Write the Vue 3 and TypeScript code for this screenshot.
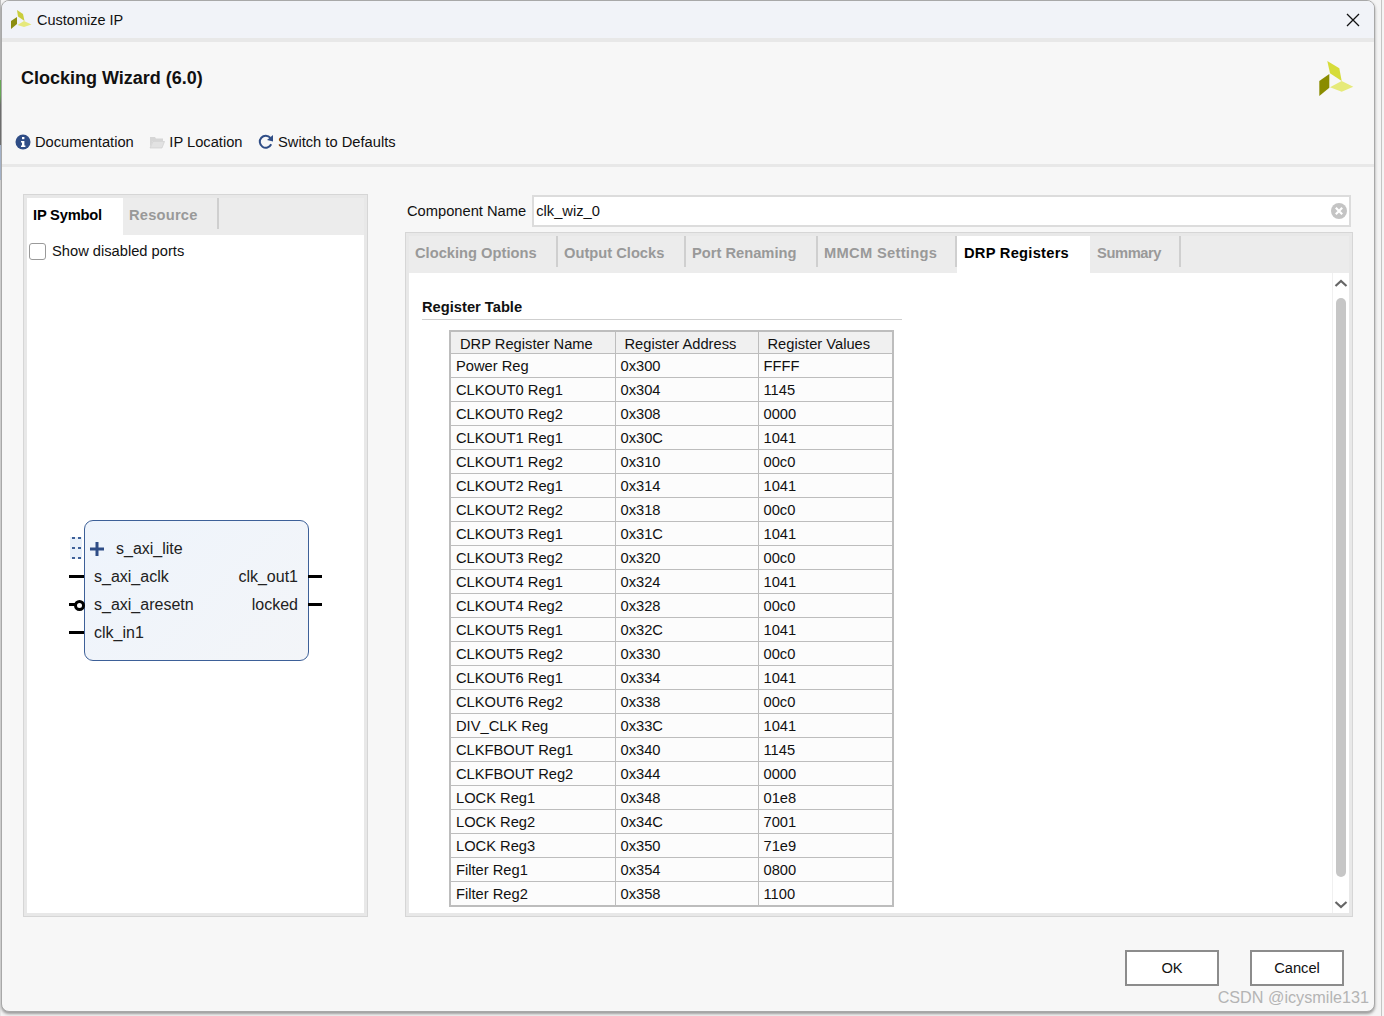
<script setup lang="ts">
const tabs = [
  { label: 'Clocking Options', w: 149, ls: 0 },
  { label: 'Output Clocks', w: 128, ls: 0 },
  { label: 'Port Renaming', w: 132, ls: 0 },
  { label: 'MMCM Settings', w: 139, ls: 0.3 },
  { label: 'DRP Registers', w: 133, ls: 0.25, active: true },
  { label: 'Summary', w: 91, ls: -0.4 },
]
const rows: [string, string, string][] = [
  ['Power Reg', '0x300', 'FFFF'],
  ['CLKOUT0 Reg1', '0x304', '1145'],
  ['CLKOUT0 Reg2', '0x308', '0000'],
  ['CLKOUT1 Reg1', '0x30C', '1041'],
  ['CLKOUT1 Reg2', '0x310', '00c0'],
  ['CLKOUT2 Reg1', '0x314', '1041'],
  ['CLKOUT2 Reg2', '0x318', '00c0'],
  ['CLKOUT3 Reg1', '0x31C', '1041'],
  ['CLKOUT3 Reg2', '0x320', '00c0'],
  ['CLKOUT4 Reg1', '0x324', '1041'],
  ['CLKOUT4 Reg2', '0x328', '00c0'],
  ['CLKOUT5 Reg1', '0x32C', '1041'],
  ['CLKOUT5 Reg2', '0x330', '00c0'],
  ['CLKOUT6 Reg1', '0x334', '1041'],
  ['CLKOUT6 Reg2', '0x338', '00c0'],
  ['DIV_CLK Reg', '0x33C', '1041'],
  ['CLKFBOUT Reg1', '0x340', '1145'],
  ['CLKFBOUT Reg2', '0x344', '0000'],
  ['LOCK Reg1', '0x348', '01e8'],
  ['LOCK Reg2', '0x34C', '7001'],
  ['LOCK Reg3', '0x350', '71e9'],
  ['Filter Reg1', '0x354', '0800'],
  ['Filter Reg2', '0x358', '1100'],
]
</script>

<template>
  <div class="page">
    <div class="window">
      <div class="titlebar">
        <svg class="logo-small" width="21" height="20" viewBox="0 0 21 20">
          <polygon points="6,0 12,4 13.500,11 7,6.500" fill="#c9cd3c" />
          <polygon points="0,11 6,7 6,14 0,19" fill="#8c8e10" />
          <polygon points="6.500,15 13,11 20.500,14.500 13,17" fill="#e6e97c" />
        </svg>
        <span class="title-text">Customize IP</span>
        <svg class="close" width="14" height="14" viewBox="0 0 14 14">
          <path d="M1 1 13 13M13 1 1 13" stroke="#111" stroke-width="1.300" fill="none" />
        </svg>
      </div>
      <div class="header">
        <div class="head-top">
          <div class="heading">Clocking Wizard (6.0)</div>
          <svg class="logo-big" width="36" height="36" viewBox="0 0 36 36">
            <polygon points="9.300,1 21.300,8.300 23.700,21 12,13.300" fill="#d6dc3a" />
            <polygon points="1.300,21 11.300,14 11.300,27.700 1.300,36" fill="#8a8c00" />
            <polygon points="12,27.300 23.700,21 35.300,26.700 23.700,31.700" fill="#e6ea7a" />
          </svg>
        </div>
        <div class="links">
          <span class="link">
            <svg width="16" height="16" viewBox="0 0 16 16">
              <circle cx="8" cy="8" r="7.500" fill="#2f4d86" />
              <rect x="7" y="3" width="2.400" height="2.200" fill="#fff" />
              <path d="M6 7h3.400v4.500h1V13H6v-1.500h1V8.500H6z" fill="#fff" />
            </svg>
            Documentation
          </span>
          <span class="link">
            <svg width="16" height="14" viewBox="0 0 16 14">
              <path d="M1 2h5l1 1.500h7V6H4L1 12z" fill="#d6d6d6" />
              <path d="M4 6.500h11.500L13 13H1z" fill="#e2e2e2" stroke="#cfcfcf" stroke-width=".7" />
            </svg>
            IP Location
          </span>
          <span class="link">
            <svg width="16" height="16" viewBox="0 0 16 16">
              <path d="M13.200 10.300A6 6 0 1 1 12.400 3.900" fill="none" stroke="#2f4d86" stroke-width="2" />
              <polygon points="15,1 15,7.500 9,6" fill="#2f4d86" />
            </svg>
            Switch to Defaults
          </span>
        </div>
      </div>

      <div class="body">
        <section class="left-panel">
          <div class="tabbar">
            <div class="tab active left-active">IP Symbol</div>
            <div class="tab left-res">Resource</div>
          </div>
          <div class="left-content">
            <label class="check"><span class="box"></span>Show disabled ports</label>
            <div class="symbol-wrap">
              <div class="symbol">
                <div class="bus-dots"></div>
                <div class="sym-row bus-row">
                  <svg width="16" height="16" viewBox="0 0 16 16"><path d="M8 1v14M1 8h14" stroke="#2f4d86" stroke-width="3" /></svg>
                  <span>s_axi_lite</span>
                </div>
                <div class="sym-row">
                  <span class="pin pin-l"></span><span>s_axi_aclk</span>
                  <span class="right-label">clk_out1</span><span class="pin pin-r"></span>
                </div>
                <div class="sym-row">
                  <span class="pin pin-l"></span><span class="bubble"></span><span>s_axi_aresetn</span>
                  <span class="right-label">locked</span><span class="pin pin-r"></span>
                </div>
                <div class="sym-row">
                  <span class="pin pin-l"></span><span>clk_in1</span>
                </div>
              </div>
            </div>
          </div>
        </section>

        <section class="right-col">
          <div class="name-row">
            <span class="name-label">Component Name</span>
            <div class="name-input">
              <span>clk_wiz_0</span>
              <svg width="16" height="16" viewBox="0 0 16 16">
                <circle cx="8" cy="8" r="8" fill="#c4c4c4" />
                <path d="M4.800 4.800 11.200 11.200M11.200 4.800 4.800 11.200" stroke="#fff" stroke-width="2.200" />
              </svg>
            </div>
          </div>
          <div class="right-panel">
            <div class="tabbar right-tabs">
              <div
                v-for="t in tabs"
                :key="t.label"
                class="tab rt"
                :class="{ active: t.active }"
                :style="{ width: t.w + 'px', letterSpacing: t.ls + 'px' }"
              >{{ t.label }}</div>
            </div>
            <div class="right-content">
              <div class="scroll-area">
                <div class="section-title">Register Table</div>
                <table class="reg">
                  <thead>
                    <tr>
                      <th class="c1">DRP Register Name</th>
                      <th class="c2">Register Address</th>
                      <th class="c3">Register Values</th>
                    </tr>
                  </thead>
                  <tbody>
                    <tr v-for="r in rows" :key="r[1]">
                      <td>{{ r[0] }}</td>
                      <td>{{ r[1] }}</td>
                      <td>{{ r[2] }}</td>
                    </tr>
                  </tbody>
                </table>
              </div>
              <div class="scrollbar">
                <svg width="14" height="10" viewBox="0 0 14 10"><path d="M1.500 8 7 3l5.500 5" fill="none" stroke="#666" stroke-width="2.200" /></svg>
                <div class="thumb"></div>
                <svg width="14" height="10" viewBox="0 0 14 10"><path d="M1.500 2 7 7l5.500-5" fill="none" stroke="#666" stroke-width="2.200" /></svg>
              </div>
            </div>
          </div>
        </section>
      </div>

      <div class="footer">
        <button class="btn">OK</button>
        <button class="btn">Cancel</button>
      </div>
      <div class="watermark">CSDN @icysmile131</div>
    </div>
  </div>
</template>

<style>
html, body { margin: 0; padding: 0; background: #fff; }
</style>

<style scoped>
.page {
  width: 1384px;
  height: 1016px;
  overflow: hidden;
  background:
    linear-gradient(#bdbdbd 0 80px, #4caf30 80px 95px, #555 105px 145px, #a9bfe0 145px 180px, #e8e8e8 180px) left top / 1px 100% no-repeat,
    linear-gradient(#c4c4c4, #c4c4c4) 1381px 0 / 1px 100% no-repeat,
    #f4f4f4;
  font-family: "Liberation Sans", Arial, sans-serif;
  color: #111;
  font-size: 14.7px;
  box-sizing: border-box;
  padding: 0 0 0 1px;
}
.window {
  position: relative;
  width: 1374px;
  height: 1012px;
  box-sizing: border-box;
  background: #f7f7f7;
  border: 1px solid #a8a8a8;
  border-radius: 8px;
  box-shadow: 0 2px 3px #999;
  overflow: hidden;
  display: flex;
  flex-direction: column;
}
.titlebar {
  height: 37px;
  flex: none;
  background: #f1f3f8;
  border-bottom: 4px solid #e8e8e8;
  display: flex;
  align-items: center;
  padding: 0 14px 0 9px;
}
.title-text { margin-left: 5px; font-size: 14.5px; }
.close { margin-left: auto; }
.header {
  height: 125px;
  flex: none;
  border-bottom: 3px solid #e8e8e8;
  display: flex;
  flex-direction: column;
  box-sizing: border-box;
}
.head-top {
  display: flex;
  justify-content: space-between;
  padding: 18px 20px 0 19px;
  height: 68px;
}
.heading {
  font-size: 18px;
  font-weight: 700;
  line-height: 34px;
  margin-top: 1px;
}
.links {
  display: flex;
  gap: 15.500px;
  padding-left: 13px;
  margin-top: 4px;
  line-height: 20px;
}
.link { display: flex; align-items: center; gap: 4px; }
.body {
  display: flex;
  padding: 27px 0 0 21px;
  gap: 37px;
  flex: none;
}
.left-panel {
  width: 345px;
  height: 723px;
  box-sizing: border-box;
  border: 1px solid #d6d6d6;
  background: #e8e8e8;
  padding: 3px;
  display: flex;
  flex-direction: column;
}
.tabbar {
  display: flex;
  background: #ececec;
  height: 37px;
  flex: none;
}
.tab {
  font-weight: 700;
  color: #999;
  box-sizing: border-box;
  font-size: 14.7px;
  line-height: 34px;
  position: relative;
}
.tab.active { background: #fff; color: #000; }
.left-active { width: 96px; padding-left: 6px; letter-spacing: -0.2px; }
.left-res {
  width: 96px;
  padding-left: 6px;
  letter-spacing: 0.2px;
}
.left-res::after,
.rt:not(.active)::after {
  content: '';
  position: absolute;
  right: 0;
  top: 0;
  height: 31px;
  width: 2px;
  background: #cfcfcf;
}
.left-content {
  flex: 1;
  background: #fff;
  display: flex;
  flex-direction: column;
}
.check {
  display: flex;
  align-items: center;
  gap: 6px;
  padding: 7px 0 0 2px;
  line-height: 18px;
}
.box {
  width: 15px;
  height: 15px;
  border: 1.500px solid #9a9a9a;
  border-radius: 3px;
  background: #fff;
  flex: none;
}
.symbol-wrap { padding: 260px 0 0 57px; }
.symbol {
  position: relative;
  width: 225px;
  height: 141px;
  box-sizing: border-box;
  border: 1px solid #3d6098;
  border-radius: 9px;
  background: linear-gradient(135deg, #eef4fc, #f3f5f8);
  padding-top: 14px;
  font-size: 16px;
  color: #222;
}
.bus-dots {
  position: absolute;
  left: -15px;
  top: 16px;
  width: 12px;
  height: 22px;
  background:
    repeating-linear-gradient(90deg, #3d6098 0 3px, transparent 3px 6px) 2px 0 / 9px 2px no-repeat,
    repeating-linear-gradient(90deg, #3d6098 0 3px, transparent 3px 6px) 2px 10px / 9px 2px no-repeat,
    repeating-linear-gradient(90deg, #3d6098 0 3px, transparent 3px 6px) 2px 20px / 9px 2px no-repeat,
    #e8f0fa;
}
.sym-row {
  position: relative;
  height: 28px;
  display: flex;
  align-items: center;
  padding: 0 10px 0 9px;
}
.bus-row { padding-left: 4px; gap: 11px; }
.right-label { margin-left: auto; }
.pin {
  position: absolute;
  top: 12px;
  height: 3px;
  width: 15px;
  background: #000;
}
.pin-l { left: -16px; }
.pin-r { right: -14px; width: 14px; }
.bubble {
  position: absolute;
  left: -11px;
  top: 8.500px;
  width: 5px;
  height: 5px;
  border: 3px solid #000;
  border-radius: 50%;
  background: #fff;
}
.right-col {
  width: 948px;
  display: flex;
  flex-direction: column;
}
.name-row {
  display: flex;
  align-items: center;
  height: 32px;
  margin-top: 1px;
  gap: 6px;
  padding-left: 2px;
}
.name-input {
  width: 819px;
  height: 32px;
  box-sizing: border-box;
  border: 2px solid #dcdcdc;
  background: #fff;
  display: flex;
  align-items: center;
  justify-content: space-between;
  padding: 0 2px;
}
.right-panel {
  margin-top: 5px;
  height: 685px;
  box-sizing: border-box;
  border: 1px solid #d6d6d6;
  background: #e8e8e8;
  padding: 3px;
  display: flex;
  flex-direction: column;
}
.rt { padding-left: 6px; }
.rt.active,
.rt.active + .rt { padding-left: 7px; }
.right-content {
  flex: 1;
  background: #fff;
  display: flex;
  min-height: 0;
}
.scroll-area { flex: 1; padding: 24px 0 0 13px; }
.section-title {
  width: 480px;
  font-weight: 700;
  font-size: 14.7px;
  line-height: 20px;
  padding-bottom: 2px;
  border-bottom: 1px solid #cfcfcf;
}
.reg {
  margin: 10px 0 0 27px;
  border-collapse: collapse;
  border: 2px solid #bdbdbd;
  table-layout: fixed;
  width: 445px;
}
.reg th {
  background: #f0f0f0;
  font-weight: 400;
  text-align: left;
  height: 18px;
  padding: 3px 0 0 9px;
  border: 1px solid #bdbdbd;
}
.reg td {
  height: 23px;
  padding: 0 0 0 5px;
  border: 1px solid #bdbdbd;
  background: #fcfcfc;
}
.reg .c1 { width: 165px; box-sizing: border-box; }
.reg .c2 { width: 143px; box-sizing: border-box; }
.scrollbar {
  width: 17px;
  flex: none;
  border-left: 1px solid #f0f0f0;
  display: flex;
  flex-direction: column;
  align-items: center;
  padding: 5px 0 3px;
  box-sizing: border-box;
}
.thumb {
  width: 10px;
  flex: 1;
  margin: 10px 1px 23px 0;
  background: #c6c6c6;
  border-radius: 5px;
}
.footer {
  display: flex;
  gap: 31px;
  justify-content: flex-end;
  padding: 33px 30px 0 0;
}
.btn {
  width: 94px;
  height: 36px;
  background: #fff;
  border: 2px solid #8c8c8c;
  font: inherit;
  color: #111;
  padding: 0;
}
.watermark {
  position: absolute;
  right: 5px;
  top: 986px;
  font-size: 16.200px;
  color: #b4b4b4;
  line-height: 20px;
}
</style>
